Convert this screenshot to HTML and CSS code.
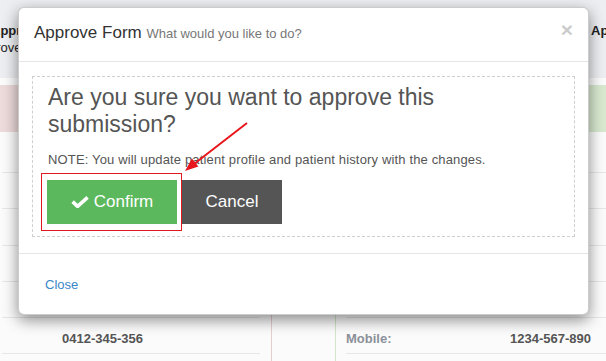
FILE: index.html
```html
<!DOCTYPE html>
<html>
<head>
<meta charset="utf-8">
<link rel="stylesheet" href="styles.css">
</head>
<body>
<div class="page">
  <header class="band">
    <div class="band-left">
      <div class="band-title">Approve Form</div>
      <div class="band-sub">Approve submission</div>
    </div>
    <div class="band-right">Approve</div>
  </header>
  <div class="panels">
    <section class="panel panel-danger">
      <div class="panel-heading"></div>
      <ul class="list">
        <li class="row"></li>
        <li class="row"></li>
        <li class="row"></li>
        <li class="row"></li>
        <li class="row"></li>
        <li class="row"><span class="label"></span><span class="value">0412-345-356</span></li>
        <li class="row"></li>
      </ul>
    </section>
    <section class="panel panel-success">
      <div class="panel-heading"></div>
      <ul class="list">
        <li class="row"></li>
        <li class="row"></li>
        <li class="row"></li>
        <li class="row"></li>
        <li class="row"></li>
        <li class="row"><span class="label">Mobile:</span><span class="value">1234-567-890</span></li>
        <li class="row"></li>
      </ul>
    </section>
  </div>
</div>

<div class="modal">
  <div class="modal-header">
    <h4 class="modal-title">Approve Form <small class="modal-sub">What would you like to do?</small></h4>
    <span class="close">&times;</span>
  </div>
  <div class="modal-body">
    <div class="confirm-box">
      <h3 class="question">Are you sure you want to approve this submission?</h3>
      <p class="note">NOTE: You will update patient profile and patient history with the changes.</p>
      <div class="actions">
        <span class="highlight">
          <button class="btn btn-confirm">
            <svg class="check" width="18" height="12" viewBox="0 0 18 12"><path d="M1.6 5.6 L6.6 10.4 L16.6 1.4" fill="none" stroke="#fff" stroke-width="3.6"/></svg>
            <span>Confirm</span>
          </button>
        </span>
        <button class="btn btn-cancel">Cancel</button>
      </div>
    </div>
  </div>
  <div class="modal-footer">
    <a class="close-link">Close</a>
  </div>
</div>

<svg class="arrow" width="606" height="361" viewBox="0 0 606 361">
  <line x1="247" y1="123" x2="194" y2="164" stroke="#e8161c" stroke-width="2"/>
  <polygon points="185,171 198.4,166.5 192,158.5" fill="#e8161c"/>
</svg>
</body>
</html>
```

FILE: styles.css
```css
html, body {
  margin: 0;
  padding: 0;
}
body {
  width: 606px;
  height: 361px;
  overflow: hidden;
  position: relative;
  background: #fbfbfb;
  font-family: "Liberation Sans", Arial, sans-serif;
  color: #333;
}

.page {
  width: 606px;
}

.band {
  height: 78px;
  background: #eceef1;
  display: flex;
  padding-top: 22px;
  box-sizing: border-box;
  font-size: 13px;
  line-height: 17px;
  color: #222;
  white-space: nowrap;
}
.band-left {
  overflow: hidden;
  width: 18px;
}
.band-title {
  font-weight: bold;
  margin-left: -9px;
}
.band-sub {
  margin-left: -27px;
}
.band-right {
  margin-left: auto;
  width: 15px;
  font-weight: bold;
}

.panels {
  display: flex;
  margin-top: 7px;
}
.panel {
  box-sizing: border-box;
  border: 1px solid;
  border-top: none;
  flex: none;
}
.panel-danger {
  margin-left: -10px;
  width: 282px;
  border-color: #e6cdd0;
}
.panel-success {
  margin-left: 63px;
  width: 282px;
  border-color: #d2e5c7;
}
.panel-heading {
  height: 47px;
}
.panel-danger .panel-heading {
  background: #eddadb;
}
.panel-success .panel-heading {
  background: #d8e9d0;
}
.list {
  list-style: none;
  margin: 0;
  padding: 0 11px;
}
.panel-success .list {
  padding: 0 10px;
}
.row {
  box-sizing: border-box;
  height: 36px;
  border-bottom: 1px solid #e6e6e6;
  display: flex;
  padding-top: 6px;
  font-size: 13px;
  line-height: 30px;
  font-weight: bold;
}
.row:first-child {
  height: 41px;
}
.row:nth-child(3) {
  height: 37px;
}
.panel-danger .label {
  width: 60px;
}
.panel-success .label {
  color: #8b9099;
}
.value {
  color: #555;
}
.panel-success .value {
  margin-left: auto;
  padding-right: 15px;
}

/* modal */
.modal {
  position: absolute;
  left: 18px;
  top: 7px;
  width: 571px;
  box-sizing: border-box;
  background: #fff;
  border: 1px solid rgba(0, 0, 0, 0.2);
  border-radius: 6px;
  box-shadow: 0 5px 15px rgba(0, 0, 0, 0.45);
}
.modal-header {
  display: flex;
  align-items: flex-start;
  padding: 13px 15px 15px;
  border-bottom: 1px solid #e5e5e5;
}
.modal-title {
  margin: 0;
  font-size: 17px;
  line-height: 24px;
  font-weight: normal;
  color: #333;
}
.modal-sub {
  font-size: 13px;
  color: #777;
}
.close {
  margin-left: auto;
  margin-top: -2px;
  margin-right: 0;
  font-size: 21px;
  line-height: 21px;
  font-weight: bold;
  color: #000;
  opacity: 0.2;
}
.modal-body {
  padding: 14px 13px 16px;
}
.confirm-box {
  border: 1px dashed #cfcfcf;
  padding: 7px 15px 5px;
}
.question {
  margin: 0;
  font-size: 23px;
  line-height: 27px;
  font-weight: normal;
  color: #555;
}
.note {
  margin: 13px 0 4px;
  font-size: 13px;
  line-height: 18px;
  letter-spacing: 0.15px;
  color: #555;
}
.actions {
  display: flex;
  align-items: center;
  margin-left: -7px;
}
.highlight {
  display: flex;
  border: 1px solid #e0191f;
  padding: 6px 4px 6px 5px;
}
.btn {
  border: none;
  height: 44px;
  font-family: "Liberation Sans", Arial, sans-serif;
  font-size: 17px;
  color: #fff;
  display: flex;
  align-items: center;
  justify-content: center;
  padding: 0;
}
.btn-confirm {
  width: 130px;
  background: #5cb85c;
  gap: 5px;
}
.btn-cancel {
  width: 100px;
  background: #555;
}
.check {
  display: block;
}
.modal-footer {
  padding: 21px 26px 20px;
  border-top: 1px solid #e5e5e5;
}
.close-link {
  font-size: 13px;
  line-height: 19px;
  color: #3a87c8;
}

.arrow {
  position: absolute;
  left: 0;
  top: 0;
  pointer-events: none;
}
```
